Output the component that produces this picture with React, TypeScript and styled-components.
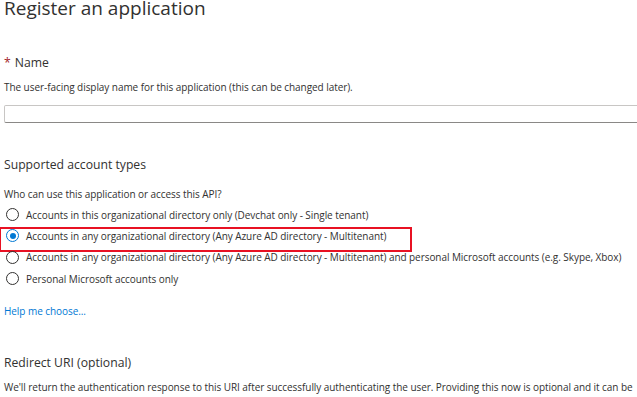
import React, { useState } from 'react';
import styled, { createGlobalStyle } from 'styled-components';

const GlobalStyle = createGlobalStyle`
  html, body {
    margin: 0;
    padding: 0;
    background: #ffffff;
    overflow: hidden;
  }
  body {
    font-family: 'Open Sans', 'Noto Sans', sans-serif;
    color: #323130;
  }
`;

const Page = styled.div`
  width: 637px;
  height: 397px;
  padding-left: 4px;
  box-sizing: border-box;
  overflow: hidden;
`;

const Title = styled.h1`
  margin: -4px 0 0;
  font-size: 19px;
  line-height: 24px;
  font-weight: 400;
  color: #323130;
`;

const SectionTitle = styled.h2<{ $top: number }>`
  margin: ${({ $top }) => $top}px 0 0;
  font-size: 12.2px;
  line-height: 18px;
  font-weight: 400;
  color: #323130;
`;

const Required = styled.span`
  color: #a4262c;
  margin-right: 4px;
`;

const Hint = styled.p<{ $top: number }>`
  margin: ${({ $top }) => $top}px 0 0;
  font-size: 10px;
  letter-spacing: -0.06px;
  line-height: 14px;
  white-space: nowrap;
  color: #323130;
`;

const TextInput = styled.input`
  display: block;
  margin-top: 11px;
  width: 700px;
  height: 18px;
  box-sizing: border-box;
  border: 1px solid #c8c6c4;
  border-bottom-color: #8a8886;
  border-radius: 2px;
  padding: 0 6px;
  font: inherit;
  font-size: 10px;
  outline: none;
`;

const RadioList = styled.div`
  display: flex;
  flex-direction: column;
  margin-top: 3px;
`;

const RadioRow = styled.label<{ $highlighted?: boolean }>`
  position: relative;
  display: flex;
  align-items: center;
  gap: 7px;
  height: 21.3px;
  font-size: 10px;
  letter-spacing: -0.06px;
  white-space: nowrap;
  cursor: pointer;

  &::after {
    content: '';
    display: ${({ $highlighted }) => ($highlighted ? 'block' : 'none')};
    position: absolute;
    left: -5px;
    top: 2px;
    width: 413px;
    height: 25px;
    box-sizing: border-box;
    border: 2px solid #e81123;
    pointer-events: none;
  }
`;

const RadioCircle = styled.span<{ $checked: boolean }>`
  flex: none;
  width: 13px;
  height: 13px;
  margin-left: 2px;
  box-sizing: border-box;
  border-radius: 50%;
  border: 1px solid ${({ $checked }) => ($checked ? '#0078d4' : '#323130')};
  display: flex;
  align-items: center;
  justify-content: center;

  &::before {
    content: '';
    width: 6px;
    height: 6px;
    border-radius: 50%;
    background: #0078d4;
    display: ${({ $checked }) => ($checked ? 'block' : 'none')};
  }
`;

const HelpLink = styled.a`
  display: block;
  margin-top: 15px;
  font-size: 10px;
  letter-spacing: -0.06px;
  line-height: 14px;
  color: #0078d4;
  text-decoration: none;
`;

const options = [
  'Accounts in this organizational directory only (Devchat only - Single tenant)',
  'Accounts in any organizational directory (Any Azure AD directory - Multitenant)',
  'Accounts in any organizational directory (Any Azure AD directory - Multitenant) and personal Microsoft accounts (e.g. Skype, Xbox)',
  'Personal Microsoft accounts only',
];

const App = () => {
  const [selected, setSelected] = useState(1);

  return (
    <Page>
      <GlobalStyle />
      <Title>Register an application</Title>

      <SectionTitle $top={34}>
        <Required>*</Required>Name
      </SectionTitle>
      <Hint $top={8}>The user-facing display name for this application (this can be changed later).</Hint>
      <TextInput />

      <SectionTitle $top={33}>Supported account types</SectionTitle>
      <Hint $top={13}>Who can use this application or access this API?</Hint>
      <RadioList>
        {options.map((text, i) => (
          <RadioRow key={i} $highlighted={i === 1} onClick={() => setSelected(i)}>
            <RadioCircle $checked={selected === i} />
            {text}
          </RadioRow>
        ))}
      </RadioList>
      <HelpLink href="#">Help me choose...</HelpLink>

      <SectionTitle $top={36}>Redirect URI (optional)</SectionTitle>
      <Hint $top={8}>
        We'll return the authentication response to this URI after successfully authenticating the user. Providing this now is optional and it can be
      </Hint>
      <Hint $top={0}>changed later, but a value is required for most authentication scenarios.</Hint>
    </Page>
  );
};

export default App;
